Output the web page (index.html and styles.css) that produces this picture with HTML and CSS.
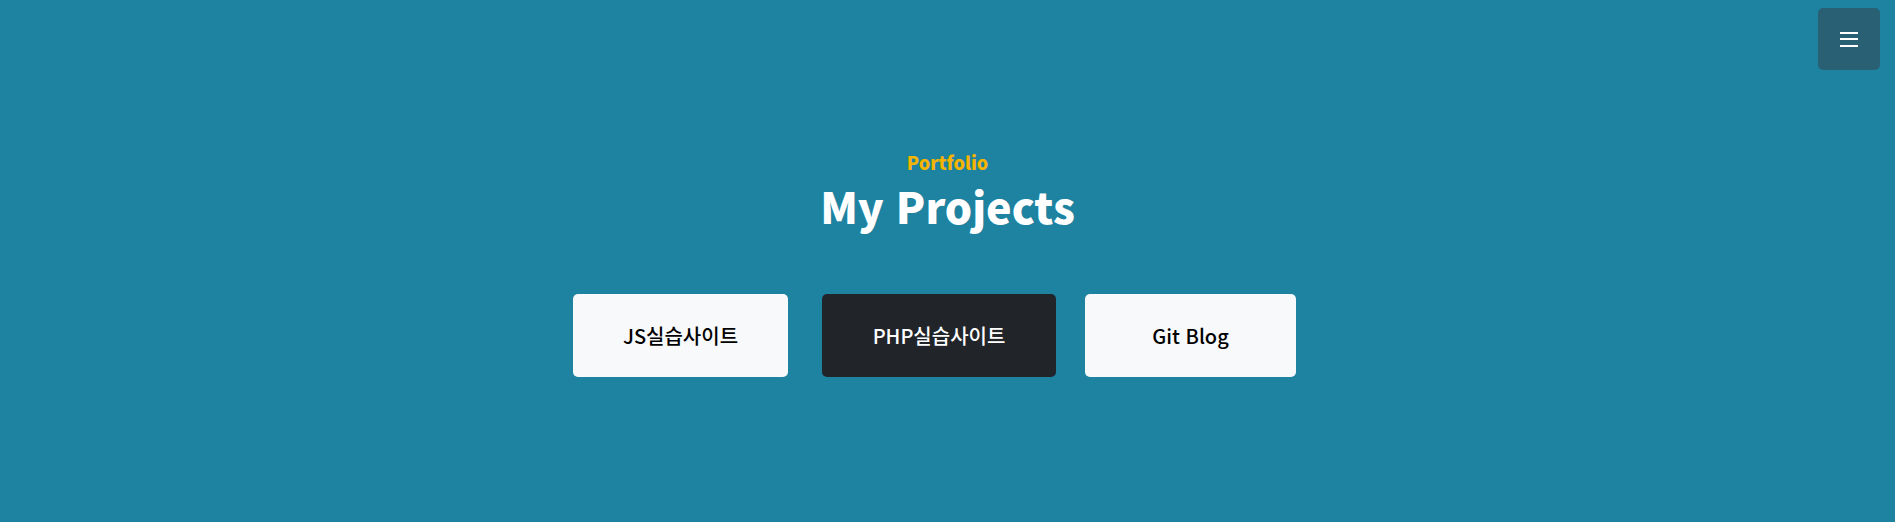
FILE: index.html
```html
<!DOCTYPE html>
<html lang="ko">
<head>
<meta charset="utf-8">
<title>My Projects</title>
<link rel="stylesheet" href="styles.css">
</head>
<body>
<button class="menu-btn" aria-label="menu">
  <span class="bar"></span><span class="bar"></span><span class="bar"></span>
</button>
<section class="projects">
  <header class="heading">
    <p class="eyebrow">Portfolio</p>
    <h1 class="title">My Projects</h1>
  </header>
  <div class="btn-row">
    <a class="proj-btn light js">JS실습사이트</a>
    <a class="proj-btn dark php">PHP실습사이트</a>
    <a class="proj-btn light git">Git Blog</a>
  </div>
</section>
</body>
</html>
```
FILE: styles.css
```css
html, body {
  margin: 0;
  padding: 0;
  height: 100%;
}
body {
  background: #1e82a1;
  font-family: "Noto Sans CJK KR", "Noto Sans", sans-serif;
  overflow: hidden;
}
.menu-btn {
  position: absolute;
  top: 8px;
  right: 15px;
  width: 62px;
  height: 62px;
  border: none;
  border-radius: 5px;
  background: #2a6074;
  display: flex;
  flex-direction: column;
  align-items: center;
  justify-content: center;
  gap: 4.5px;
  padding: 0;
}
.bar {
  display: block;
  width: 18px;
  height: 2px;
  background: #ffffff;
}
.projects {
  display: flex;
  flex-direction: column;
  align-items: center;
  padding-top: 149px;
}
.heading {
  text-align: center;
}
.eyebrow {
  margin: 0;
  color: #f4b400;
  font-weight: 900;
  font-size: 18px;
  line-height: 26px;
}
.title {
  margin: 0;
  color: #ffffff;
  font-weight: 900;
  font-size: 43px;
  line-height: 60px;
}
.btn-row {
  display: flex;
  margin-top: 59px;
  padding-right: 26px;
}
.proj-btn {
  display: flex;
  align-items: center;
  justify-content: center;
  height: 83px;
  border-radius: 5px;
  font-size: 20px;
  font-weight: 500;
  text-decoration: none;
}
.light {
  background: #f8f9fa;
  color: #000000;
}
.dark {
  background: #212529;
  color: #ffffff;
}
.js { width: 215px; margin-right: 34px; }
.php { width: 234px; margin-right: 29px; }
.git { width: 211px; }
```
